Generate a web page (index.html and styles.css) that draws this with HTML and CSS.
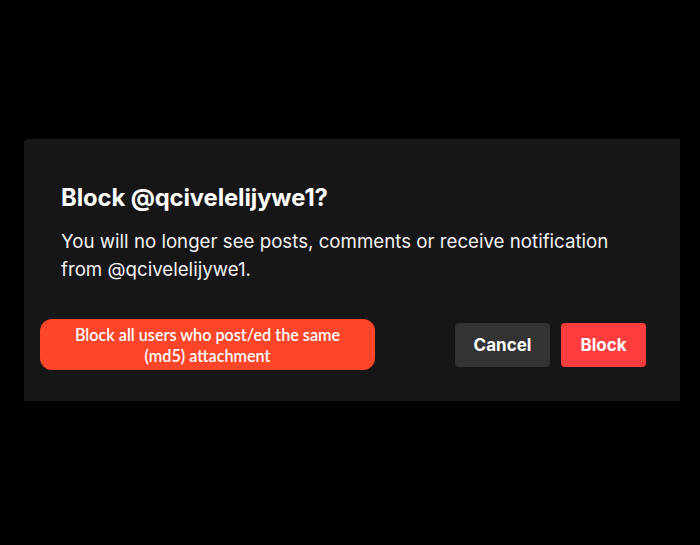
FILE: index.html
```html
<!DOCTYPE html>
<html>
<head>
<meta charset="utf-8">
<link rel="stylesheet" href="styles.css">
</head>
<body>
<div class="page">
  <div class="dialog">
    <h1 class="title">Block @qcivelelijywe1?</h1>
    <p class="message">You will no longer see posts, comments or receive notification from @qcivelelijywe1.</p>
    <div class="actions">
      <button class="btn-all">Block all users who post/ed the same<br>(md5) attachment</button>
      <div class="right">
        <button class="btn btn-cancel">Cancel</button>
        <button class="btn btn-block">Block</button>
      </div>
    </div>
  </div>
</div>
</body>
</html>
```
FILE: styles.css
```css
html, body {
  margin: 0;
  padding: 0;
  background: #000;
}
.page {
  width: 700px;
  height: 545px;
  padding-top: 139px;
  padding-left: 24px;
  box-sizing: border-box;
}
.dialog {
  width: 656px;
  height: 262px;
  background: #161616;
  border-radius: 4px 0 0 0;
  box-sizing: border-box;
  padding: 44px 0 0 37px;
  font-family: Inter, "Noto Sans", sans-serif;
  color: #fff;
}
.title {
  margin: 0;
  font-size: 23.8px;
  font-weight: 700;
  line-height: 30px;
  letter-spacing: -0.1px;
}
.message {
  margin: 15px 0 0 0;
  width: 590px;
  font-size: 18.7px;
  line-height: 28px;
  font-weight: 400;
  color: #f2f2f2;
}
.actions {
  display: flex;
  align-items: center;
  justify-content: space-between;
  margin: 35px 0 0 -21px;
  padding-right: 34px;
}
.btn-all {
  width: 335px;
  height: 51px;
  background: #fd4529;
  border: none;
  border-radius: 12px;
  color: #fff;
  font-family: Lato, "Noto Sans", sans-serif;
  font-weight: 600;
  font-size: 16.2px;
  line-height: 21px;
  padding: 0;
}
.right {
  display: flex;
  gap: 11px;
}
.btn {
  height: 44px;
  border: none;
  border-radius: 4px;
  color: #fff;
  font-family: Inter, "Noto Sans", sans-serif;
  font-weight: 700;
  font-size: 17px;
  padding: 0;
}
.btn-cancel {
  width: 95px;
  background: #333333;
}
.btn-block {
  width: 85px;
  background: #fd3d3d;
}
```
